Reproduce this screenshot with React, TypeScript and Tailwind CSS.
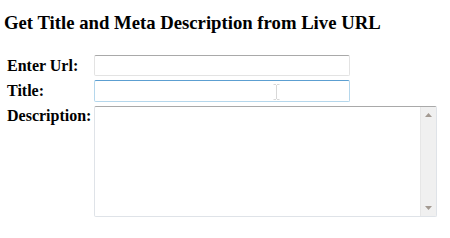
import React from "react";

export default function App() {
  const times = { fontFamily: '"Liberation Serif", "Times New Roman", serif' };
  return (
    <div className="w-[450px] h-[238px] bg-white text-black overflow-hidden" style={times}>
      <h3 className="mt-[12px] ml-[4px] text-[18.72px] leading-[21px] font-bold">
        Get Title and Meta Description from Live URL
      </h3>
      <div className="mt-[22px] grid grid-cols-[94px_auto] gap-y-[4px] items-center">
        <label className="pl-[7px] text-[16px] leading-[18px] font-bold whitespace-nowrap">Enter Url:</label>
        <div className="w-[256px] h-[21px] border border-[#e3e3e3] border-t-[#a9a9a9] rounded-[2px] bg-white" />
        <label className="pl-[7px] text-[16px] leading-[18px] font-bold whitespace-nowrap">Title:</label>
        <div className="relative w-[256px] h-[22px] border border-[#b5d7ec] border-t-[#5c9fd1] rounded-[2px] bg-white">
          <svg className="absolute left-[178px] top-[3px]" width="7" height="16" viewBox="0 0 7 16">
            <path d="M0.5 0.5h2.5M4 0.5h2.5M3.5 1v14M0.5 15.5h2.5M4 15.5h2.5" stroke="#d8d8d8" strokeWidth="1" fill="none" />
          </svg>
        </div>
        <label className="self-start pt-[1px] pl-[7px] text-[16px] leading-[18px] font-bold whitespace-nowrap">Description:</label>
        <div className="flex w-[343px] h-[111px] border border-[#dfe3e8] border-t-[#a9a9a9] rounded-[2px] bg-white">
          <div className="flex-1" />
          <div className="w-[16px] h-full bg-[#f0f0f0] border-l border-[#e6e6e6] flex flex-col items-center justify-between pt-[6px] pb-[6px]">
            <svg width="7" height="4" viewBox="0 0 7 4">
              <path d="M3.5 0 L7 4 L0 4 Z" fill="#a39a92" />
            </svg>
            <svg width="7" height="4" viewBox="0 0 7 4">
              <path d="M0 0 L7 0 L3.5 4 Z" fill="#a39a92" />
            </svg>
          </div>
        </div>
      </div>
    </div>
  );
}
